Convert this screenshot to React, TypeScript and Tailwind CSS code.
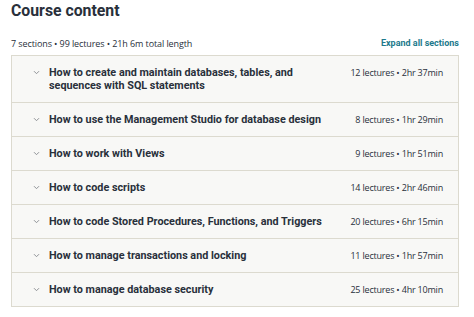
const sections = [
  { title: "How to create and maintain databases, tables, and sequences with SQL statements", meta: "12 lectures • 2hr 37min" },
  { title: "How to use the Management Studio for database design", meta: "8 lectures • 1hr 29min" },
  { title: "How to work with Views", meta: "9 lectures • 1hr 51min" },
  { title: "How to code scripts", meta: "14 lectures • 2hr 46min" },
  { title: "How to code Stored Procedures, Functions, and Triggers", meta: "20 lectures • 6hr 15min" },
  { title: "How to manage transactions and locking", meta: "11 lectures • 1hr 57min" },
  { title: "How to manage database security", meta: "25 lectures • 4hr 10min" },
];

function Chevron() {
  return (
    <svg width="7" height="5" viewBox="0 0 7 5" className="shrink-0 mt-[4px]">
      <path d="M1 1.2 L3.5 3.7 L6 1.2" fill="none" stroke="#8f9296" strokeWidth="1" />
    </svg>
  );
}

export default function App() {
  return (
    <div className="w-[474px] h-[317px] bg-white text-[#29303b] overflow-hidden font-['Open_Sans',sans-serif]">
      <div className="pl-[11px] pr-[15px]">
        <h2 className="font-['Roboto',sans-serif] text-[15.8px] leading-[20px] font-bold pt-[1px]">Course content</h2>
        <div className="flex items-end justify-between mt-[16px] h-[13px]">
          <span className="text-[9px] leading-[13px] tracking-[-0.1px]">7 sections • 99 lectures • 21h 6m total length</span>
          <button className="font-['Roboto',sans-serif] text-[9px] leading-[13px] font-bold text-[#1d7a8c]">Expand all sections</button>
        </div>
        <div className="mt-[5px] border border-[#dcdacf] bg-[#f8f8f6]">
          {sections.map((s, i) => (
            <div
              key={i}
              className={`flex items-start py-[10px] pl-[21px] pr-[15px] ${i > 0 ? "border-t border-[#dcdacf]" : ""}`}
            >
              <Chevron />
              <div className="ml-[9px] flex-1 font-['Roboto',sans-serif] text-[10.8px] leading-[13px] font-bold pr-[20px]">
                {s.title}
              </div>
              <div className="text-[9px] leading-[13px] tracking-[-0.2px] whitespace-nowrap">{s.meta}</div>
            </div>
          ))}
        </div>
      </div>
    </div>
  );
}
